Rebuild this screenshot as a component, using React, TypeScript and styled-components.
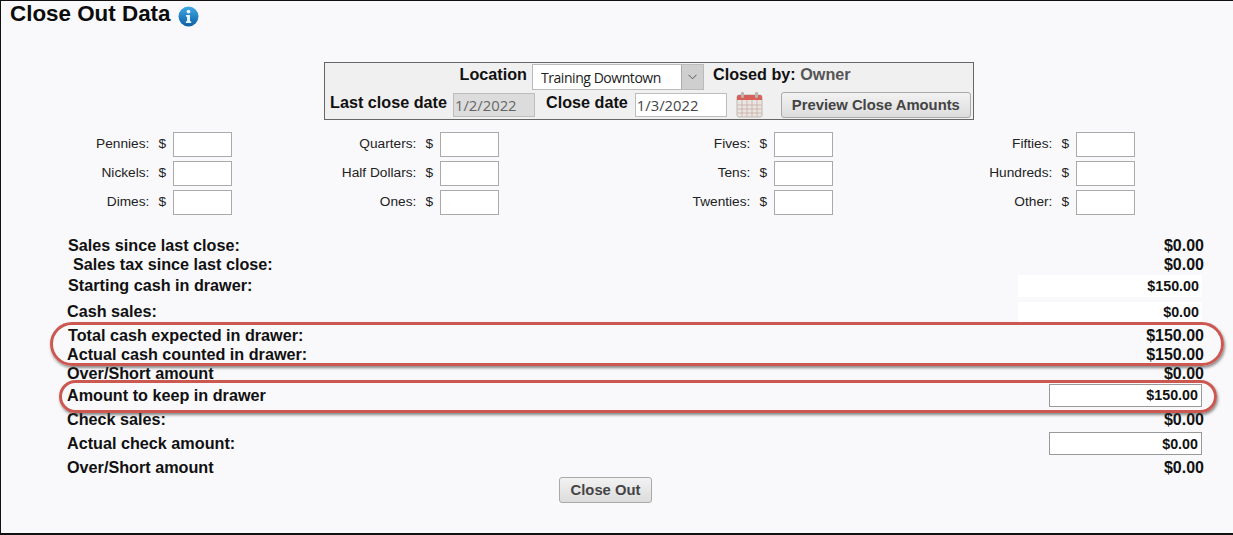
import React from "react";
import styled, { createGlobalStyle } from "styled-components";

const Global = createGlobalStyle`
  html, body { margin: 0; padding: 0; background: #fff; }
  body { font-family: "Liberation Sans", Arial, sans-serif; color: #111; }
`;

const Page = styled.div`
  position: relative;
  box-sizing: border-box;
  width: 1233px;
  height: 535px;
  background: #f9f9fb;
  border-top: 1px solid #111;
  border-left: 1px solid #111;
  border-bottom: 2px solid #111;
  overflow: hidden;
`;

const Header = styled.div`
  display: flex;
  align-items: center;
  gap: 7px;
  height: 26px;
  padding-left: 9px;
`;

const Title = styled.h1`
  margin: 0;
  font-size: 22.4px;
  font-weight: 700;
  color: #0c0c0c;
`;

const InfoSlot = styled.span`
  display: flex;
  margin-top: 5px;
`;

const ControlBox = styled.div`
  box-sizing: border-box;
  width: 650px;
  height: 58px;
  margin: 35px 0 0 323px;
  background: #f0f0f0;
  border: 1px solid #666;
  display: flex;
  flex-direction: column;
`;

const ControlRow = styled.div<{ $top: number }>`
  display: flex;
  align-items: center;
  height: 27px;
  margin-top: ${(p) => p.$top}px;
  padding-left: 5px;
`;

const ControlLabel = styled.label<{ $width?: number; $gap: number; $lead?: number }>`
  font-size: 16.2px;
  font-weight: 700;
  color: #111;
  white-space: nowrap;
  text-align: right;
  padding-bottom: 5px;
  width: ${(p) => (p.$width ? `${p.$width}px` : "auto")};
  margin-left: ${(p) => p.$lead ?? 0}px;
  margin-right: ${(p) => p.$gap}px;
`;

const SelectWrap = styled.div`
  box-sizing: border-box;
  display: flex;
  width: 172px;
  height: 26px;
  background: #fff;
  border: 1px solid #bbb;
  margin-right: 9px;
`;

const Select = styled.select`
  appearance: none;
  flex: 1;
  min-width: 0;
  border: 0;
  background: #fff;
  padding: 1px 0 0 8px;
  font-family: "Open Sans", sans-serif;
  font-size: 14px;
  letter-spacing: -0.45px;
  color: #222;
`;

const SelectArrow = styled.span`
  width: 21px;
  background: #cfcfcf;
  border-left: 1px solid #aaa;
  display: flex;
  align-items: center;
  justify-content: center;
`;

const ClosedBy = styled.span`
  font-size: 16.2px;
  font-weight: 700;
  color: #111;
  padding-bottom: 5px;
`;

const Owner = styled.span`
  color: #555;
`;

const DateInput = styled.input<{ $w: number; $disabled?: boolean }>`
  box-sizing: border-box;
  width: ${(p) => p.$w}px;
  height: 24px;
  padding: 1px 0 0 1px;
  border: 1px solid #bdbdbd;
  background: ${(p) => (p.$disabled ? "#dcdcdc" : "#fff")};
  color: ${(p) => (p.$disabled ? "#666" : "#444")};
  font-family: "Open Sans", sans-serif;
  font-size: 14.8px;
  border-radius: 0;
  outline: none;
`;

const CalendarSlot = styled.span`
  display: flex;
  margin: 0 18px 0 9px;
`;

const GreyButton = styled.button<{ $w: number; $h: number }>`
  box-sizing: border-box;
  width: ${(p) => p.$w}px;
  height: ${(p) => p.$h}px;
  padding: 0;
  border: 1px solid #a9a9a9;
  border-radius: 3px;
  background: linear-gradient(#f2f2f2, #dcdcdc);
  color: #444;
  font-family: "Liberation Sans", Arial, sans-serif;
  font-size: 14.8px;
  font-weight: 700;
`;

const CoinGrid = styled.div`
  display: grid;
  grid-template-columns: 231px 267px 334px 302px;
  grid-auto-rows: 25px;
  row-gap: 4px;
  margin-top: 12px;
`;

const Coin = styled.div`
  display: flex;
  align-items: center;
  justify-content: flex-end;
`;

const CoinLabel = styled.label`
  font-size: 13.7px;
  color: #222;
  padding-bottom: 3px;
`;

const Dollar = styled.span`
  font-size: 13.7px;
  color: #222;
  margin: 0 7px 0 9px;
  padding-bottom: 3px;
`;

const CoinInput = styled.input`
  box-sizing: border-box;
  width: 59px;
  height: 25px;
  border: 1px solid #aaa;
  background: #fff;
  border-radius: 0;
  outline: none;
`;

const Summary = styled.div`
  margin-top: 21px;
  padding: 0 29px 0 0;
`;

const Row = styled.div<{ $h: number; $indent: number }>`
  display: flex;
  align-items: center;
  justify-content: space-between;
  height: ${(p) => p.$h}px;
  padding-left: ${(p) => p.$indent}px;
`;

const RowLabel = styled.span`
  font-size: 16.2px;
  font-weight: 700;
  color: #111;
`;

const RowValue = styled.span`
  font-size: 16px;
  font-weight: 700;
  color: #111;
`;

const AmountBox = styled.div<{ $plain?: boolean; $h: number }>`
  box-sizing: border-box;
  width: ${(p) => (p.$plain ? 184 : 153)}px;
  height: ${(p) => p.$h}px;
  margin-right: 2px;
  padding-right: 3px;
  display: flex;
  align-items: center;
  justify-content: flex-end;
  background: #fff;
  border: ${(p) => (p.$plain ? "0" : "1px solid #999")};
  font-size: 14.3px;
  font-weight: 700;
  color: #111;
`;

const Footer = styled.div`
  display: flex;
  margin: -3px 0 0 558px;
`;

const Oval = styled.div<{ $x: number; $y: number; $w: number; $h: number }>`
  position: absolute;
  box-sizing: border-box;
  left: ${(p) => p.$x}px;
  top: ${(p) => p.$y}px;
  width: ${(p) => p.$w}px;
  height: ${(p) => p.$h}px;
  border: 3.5px solid #cc5852;
  border-radius: 24px;
  box-shadow: 1px 2px 3px rgba(60, 60, 60, 0.6);
  pointer-events: none;
`;

const InfoIcon = () => (
  <svg width="21" height="21" viewBox="0 0 21 21" aria-hidden="true">
    <defs>
      <linearGradient id="info" x1="0" y1="0" x2="0" y2="1">
        <stop offset="0" stopColor="#3fa9e4" />
        <stop offset="1" stopColor="#0b5fa5" />
      </linearGradient>
    </defs>
    <circle cx="10.5" cy="10.5" r="10" fill="url(#info)" />
    <circle cx="10.5" cy="5.6" r="1.9" fill="#e6f4fc" />
    <path d="M8 9h4v6.2h1.2V17H7.8v-1.8H9v-4.4H8z" fill="#e6f4fc" />
  </svg>
);

const ArrowIcon = () => (
  <svg width="9" height="6" viewBox="0 0 9 6" aria-hidden="true">
    <path d="M0.5 0.8 4.5 4.8 8.5 0.8" fill="none" stroke="#555" strokeWidth="1" />
  </svg>
);

const CalendarIcon = () => (
  <svg width="27" height="28" viewBox="0 0 27 28" aria-hidden="true">
    <rect x="1" y="4" width="25" height="22" rx="2" fill="#e9e6e2" stroke="#bdb8b2" />
    <path d="M1 9V6a2 2 0 0 1 2-2h21a2 2 0 0 1 2 2v3z" fill="#d9605a" />
    <rect x="5" y="1" width="3" height="6" rx="1.2" fill="#b9b4ae" />
    <rect x="19" y="1" width="3" height="6" rx="1.2" fill="#b9b4ae" />
    <path
      d="M1.5 14h24M1.5 18h24M1.5 22h24M6 9v17M11 9v17M16 9v17M21 9v17"
      stroke="#c9a9a4"
      strokeWidth="0.8"
      fill="none"
    />
  </svg>
);

const coins = [
  ["Pennies:", "Quarters:", "Fives:", "Fifties:"],
  ["Nickels:", "Half Dollars:", "Tens:", "Hundreds:"],
  ["Dimes:", "Ones:", "Twenties:", "Other:"],
];

type SummaryRow = {
  label: string;
  value: string;
  h: number;
  indent: number;
  box?: "plain" | "input";
  boxH?: number;
};

const rows: SummaryRow[] = [
  { label: "Sales since last close:", value: "$0.00", h: 19, indent: 67 },
  { label: "Sales tax since last close:", value: "$0.00", h: 19, indent: 72 },
  { label: "Starting cash in drawer:", value: "$150.00", h: 23, indent: 67, box: "plain", boxH: 22 },
  { label: "Cash sales:", value: "$0.00", h: 29, indent: 66, box: "plain", boxH: 20 },
  { label: "Total cash expected in drawer:", value: "$150.00", h: 19, indent: 67 },
  { label: "Actual cash counted in drawer:", value: "$150.00", h: 19, indent: 66 },
  { label: "Over/Short amount", value: "$0.00", h: 19, indent: 66 },
  { label: "Amount to keep in drawer", value: "$150.00", h: 24, indent: 66, box: "input", boxH: 23 },
  { label: "Check sales:", value: "$0.00", h: 25, indent: 66 },
  { label: "Actual check amount:", value: "$0.00", h: 23, indent: 66, box: "input", boxH: 23 },
  { label: "Over/Short amount", value: "$0.00", h: 25, indent: 66 },
];

export default function App() {
  return (
    <Page>
      <Global />
      <Header>
        <Title>Close Out Data</Title>
        <InfoSlot>
          <InfoIcon />
        </InfoSlot>
      </Header>

      <ControlBox>
        <ControlRow $top={0}>
          <ControlLabel $width={197} $gap={5}>Location</ControlLabel>
          <SelectWrap>
            <Select defaultValue="Training Downtown">
              <option>Training Downtown</option>
            </Select>
            <SelectArrow>
              <ArrowIcon />
            </SelectArrow>
          </SelectWrap>
          <ClosedBy>
            Closed by: <Owner>Owner</Owner>
          </ClosedBy>
        </ControlRow>
        <ControlRow $top={1}>
          <ControlLabel $gap={6}>Last close date</ControlLabel>
          <DateInput $w={82} $disabled readOnly value="1/2/2022" />
          <ControlLabel $lead={11} $gap={7}>Close date</ControlLabel>
          <DateInput $w={92} readOnly value="1/3/2022" />
          <CalendarSlot>
            <CalendarIcon />
          </CalendarSlot>
          <GreyButton $w={190} $h={26}>Preview Close Amounts</GreyButton>
        </ControlRow>
      </ControlBox>

      <CoinGrid>
        {coins.flatMap((row) =>
          row.map((name) => (
            <Coin key={name}>
              <CoinLabel>{name}</CoinLabel>
              <Dollar>$</Dollar>
              <CoinInput />
            </Coin>
          ))
        )}
      </CoinGrid>

      <Summary>
        {rows.map((r, i) => (
          <Row key={i} $h={r.h} $indent={r.indent}>
            <RowLabel>{r.label}</RowLabel>
            {r.box ? (
              <AmountBox $plain={r.box === "plain"} $h={r.boxH ?? 22}>{r.value}</AmountBox>
            ) : (
              <RowValue>{r.value}</RowValue>
            )}
          </Row>
        ))}
      </Summary>

      <Footer>
        <GreyButton $w={93} $h={26}>Close Out</GreyButton>
      </Footer>

      <Oval $x={49} $y={321} $w={1174} $h={44} />
      <Oval $x={58} $y={379} $w={1158} $h={33} />
    </Page>
  );
}
